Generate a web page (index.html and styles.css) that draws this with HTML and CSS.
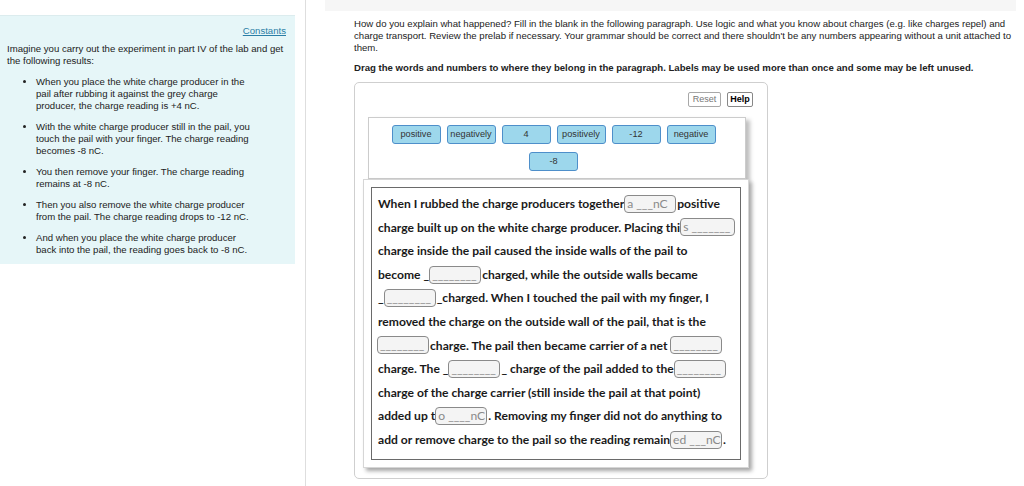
FILE: index.html
```html
<!DOCTYPE html>
<html>
<head>
<meta charset="utf-8">
<link rel="stylesheet" href="styles.css">
</head>
<body>
<div class="page">
  <div class="left">
    <div class="panel">
      <div class="constants"><a href="#">Constants</a></div>
      <p class="intro">Imagine you carry out the experiment in part IV of the lab and get the following results:</p>
      <ul class="results">
        <li>When you place the white charge producer in the pail after rubbing it against the grey charge producer, the charge reading is +4 nC.</li>
        <li>With the white charge producer still in the pail, you touch the pail with your finger. The charge reading becomes -8 nC.</li>
        <li>You then remove your finger. The charge reading remains at -8 nC.</li>
        <li>Then you also remove the white charge producer from the pail. The charge reading drops to -12 nC.</li>
        <li>And when you place the white charge producer back into the pail, the reading goes back to -8 nC.</li>
      </ul>
    </div>
  </div>
  <div class="divider"></div>
  <div class="right">
    <div class="topbar"></div>
    <div class="content">
      <p class="question">How do you explain what happened? Fill in the blank in the following paragraph. Use logic and what you know about charges (e.g. like charges repel) and charge transport. Review the prelab if necessary. Your grammar should be correct and there shouldn't be any numbers appearing without a unit attached to them.</p>
      <p class="instruction">Drag the words and numbers to where they belong in the paragraph. Labels may be used more than once and some may be left unused.</p>
      <div class="widget">
        <div class="toolbar">
          <button class="btn btn-reset">Reset</button>
          <button class="btn btn-help">Help</button>
        </div>
        <div class="labels">
          <div class="label-row">
            <span class="chip">positive</span>
            <span class="chip">negatively</span>
            <span class="chip">4</span>
            <span class="chip">positively</span>
            <span class="chip">-12</span>
            <span class="chip">negative</span>
          </div>
          <div class="label-row">
            <span class="chip">-8</span>
          </div>
        </div>
        <div class="picture">
          <div class="picture-inner">
            <div class="line">When I rubbed the charge producers together<span class="drop">a ___nC</span>positive</div>
            <div class="line">charge built up on the white charge producer. Placing thi<span class="drop wide">s _______</span></div>
            <div class="line">charge inside the pail caused the inside walls of the pail to</div>
            <div class="line">become _<span class="drop">________</span>charged, while the outside walls became</div>
            <div class="line">_<span class="drop">________</span>_charged. When I touched the pail with my finger, I</div>
            <div class="line">removed the charge on the outside wall of the pail, that is the</div>
            <div class="line"><span class="drop first">________</span>charge. The pail then became carrier of a net <span class="drop">________</span></div>
            <div class="line">charge. The _<span class="drop">________</span>_ charge of the pail added to the<span class="drop">________</span></div>
            <div class="line">charge of the charge carrier (still inside the pail at that point)</div>
            <div class="line">added up t<span class="drop">o ____nC</span>. Removing my finger did not do anything to</div>
            <div class="line">add or remove charge to the pail so the reading remain<span class="drop">ed ___nC</span>.</div>
          </div>
        </div>
      </div>
    </div>
  </div>
</div>
</body>
</html>
```

FILE: styles.css
```css
* { box-sizing: border-box; }
html, body { margin: 0; padding: 0; background: #fff; }
body {
  font-family: "Liberation Sans", Arial, sans-serif;
  font-size: 9.6px;
  color: #222;
  width: 1024px;
  height: 486px;
  overflow: hidden;
}
.page { display: flex; height: 486px; }

/* left */
.left { width: 295px; padding-top: 15px; flex: none; }
.panel {
  background: #e6f6f8;
  border-top: 1px solid #dcecee;
  padding: 9px 9px 8px 7px;
  line-height: 12px;
}
.constants { text-align: right; line-height: 12px; }
.constants a { color: #2b7ea6; text-decoration: underline; }
.intro { margin: 6px 0 0 0; width: 282px; }
.results { margin: 9px 0 0 0; padding-left: 29px; }
.results li { width: 216px; margin-bottom: 9px; }
.results li:last-child { margin-bottom: 0; }

.divider { width: 1px; background: #dedede; margin-left: 10px; flex: none; }

/* right */
.right { margin-left: 19px; width: 691px; flex: none; }
.topbar { height: 11px; background: #f6f6f6; }
.content { padding-left: 29px; }
.question { margin: 7px 0 0 0; width: 660px; line-height: 12px; }
.instruction { margin: 8px 0 0 0; font-weight: bold; line-height: 12px; }

.widget {
  margin-top: 8px;
  width: 414px;
  height: 397px;
  border: 1px solid #cfcfcf;
  border-radius: 5px;
  padding: 9px 14px 0 13px;
}
.toolbar { display: flex; justify-content: flex-end; gap: 6px; }
.btn {
  font-family: "Liberation Sans", Arial, sans-serif;
  font-size: 9px;
  height: 15px;
  padding: 0;
  background: #fff;
  border: 1px solid #a8a8a8;
  border-radius: 2px;
  line-height: 13px;
}
.btn-reset { color: #777; width: 33px; }
.btn-help { color: #000; font-weight: bold; width: 26px; border-color: #888; }

.labels {
  margin-top: 10px;
  width: 378px;
  height: 62px;
  border: 1px solid #cccccc;
  box-shadow: 4px 3px 4px rgba(0,0,0,0.25);
  padding: 7px 7px 0 0;
  display: flex;
  flex-direction: column;
  align-items: center;
  gap: 8px;
  background: #fff;
}
.label-row { display: flex; gap: 6px; justify-content: center; }
.chip {
  width: 49px;
  height: 19px;
  background: #9dd7ec;
  border: 1px solid #4e8fca;
  border-radius: 3px;
  color: #333;
  font-size: 9.2px;
  line-height: 17px;
  text-align: center;
}

.picture {
  margin-left: -5px;
  width: 386px;
  height: 289px;
  background: #fff;
  border: 1px solid #d6d6d6;
  box-shadow: 3px 3px 4px rgba(0,0,0,0.35);
  padding: 7px 8px 8px 7px;
}
.picture-inner {
  height: 273px;
  width: 370px;
  border: 1px solid #6a6a6a;
  padding: 4px 0 0 6px;
  font-family: Lato, "Open Sans", sans-serif;
  font-weight: bold;
  font-size: 12.1px;
  color: #1a1a1a;
}
.line { white-space: nowrap; height: 23.6px; line-height: 23.6px; }
.drop {
  display: inline-block;
  vertical-align: middle;
  width: 52px;
  height: 18px;
  line-height: 16px;
  border: 1px solid #8a8a8a;
  border-radius: 4px;
  background: rgba(236,236,236,0.6);
  color: #8a8a8a;
  font-weight: normal;
  padding-left: 2px;
  overflow: hidden;
  margin: -2px 1px 0 0;
}
.drop.wide { width: 55px; }
.drop.first { margin-left: -1px; }
```
